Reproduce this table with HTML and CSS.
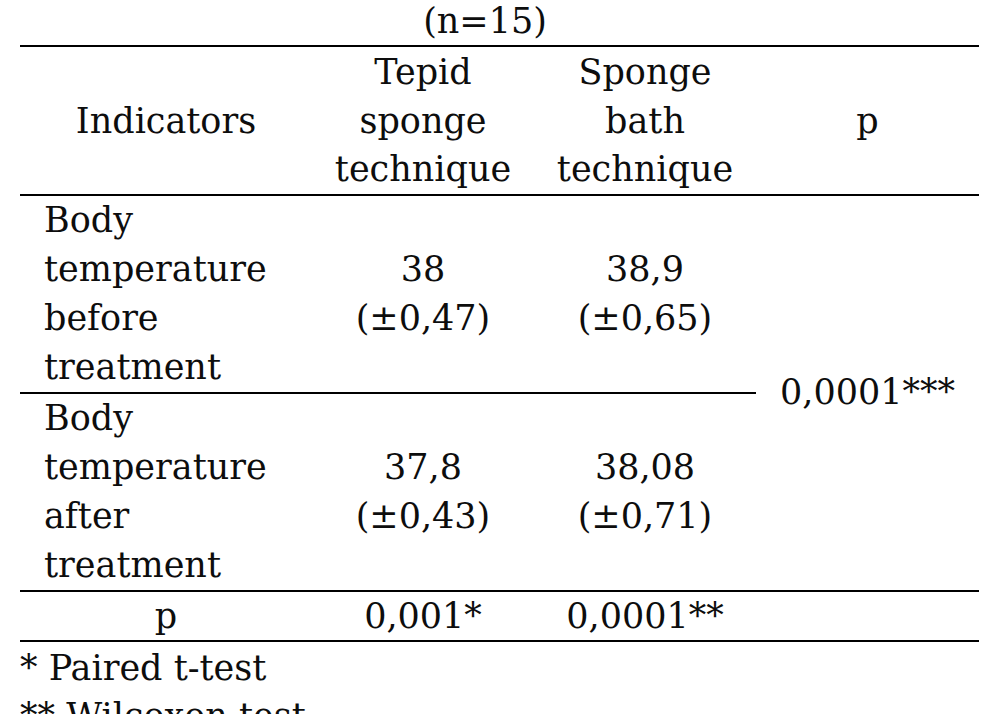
FILE: index.html
```html
<!DOCTYPE html>
<html>
<head>
<meta charset="utf-8">
<link rel="stylesheet" href="styles.css">
</head>
<body>
<div class="page">
  <div class="caption">(n=15)</div>
  <table class="results">
    <colgroup>
      <col class="c1"><col class="c2"><col class="c3"><col class="c4">
    </colgroup>
    <thead>
      <tr class="head">
        <th>Indicators</th>
        <th>Tepid<br>sponge<br>technique</th>
        <th>Sponge<br>bath<br>technique</th>
        <th>p</th>
      </tr>
    </thead>
    <tbody>
      <tr class="row1">
        <td class="label">Body<br>temperature<br>before<br>treatment</td>
        <td>38<br>(±0,47)</td>
        <td>38,9<br>(±0,65)</td>
        <td class="pval" rowspan="2">0,0001***</td>
      </tr>
      <tr class="row2">
        <td class="label">Body<br>temperature<br>after<br>treatment</td>
        <td>37,8<br>(±0,43)</td>
        <td>38,08<br>(±0,71)</td>
      </tr>
      <tr class="prow">
        <td>p</td>
        <td>0,001*</td>
        <td>0,0001**</td>
        <td></td>
      </tr>
    </tbody>
  </table>
  <div class="notes">
    <div>* Paired t-test</div>
    <div>** Wilcoxon test</div>
  </div>
</div>
</body>
</html>
```

FILE: styles.css
```css
html, body {
  margin: 0;
  padding: 0;
  background: #ffffff;
}
body {
  font-family: "DejaVu Serif", serif;
  font-size: 35px;
  line-height: 48.5px;
  color: #0d0d0d;
  overflow: hidden;
}
.page {
  width: 990px;
  height: 714px;
  overflow: hidden;
}
.caption {
  width: 959px;
  margin: -3px 0 0 20px;
  height: 48px;
  line-height: 48px;
  text-align: center;
  box-sizing: border-box;
  padding-right: 29px;
}
.results {
  margin-left: 20px;
  width: 959px;
  table-layout: fixed;
  border-collapse: collapse;
}
.c1 { width: 292px; }
.c2 { width: 222px; }
.c3 { width: 222px; }
.c4 { width: 223px; }
.results th,
.results td {
  padding: 0;
  font-weight: normal;
  text-align: center;
  vertical-align: middle;
}
.results tbody td {
  line-height: 49px;
}
.head th {
  border-top: 2px solid #000;
  border-bottom: 2px solid #000;
  padding-top: 1px;
}
.row1 td {
  border-bottom: 2px solid #000;
}
.row1 td.pval {
  border-bottom: 0;
}
.results td.label {
  text-align: left;
  padding-left: 24px;
}
.prow td {
  border-top: 2px solid #000;
  border-bottom: 2px solid #000;
  line-height: 48px;
}
.results .prow td {
  line-height: 48px;
}
.notes {
  margin-left: 20px;
  margin-top: 2px;
}
```
